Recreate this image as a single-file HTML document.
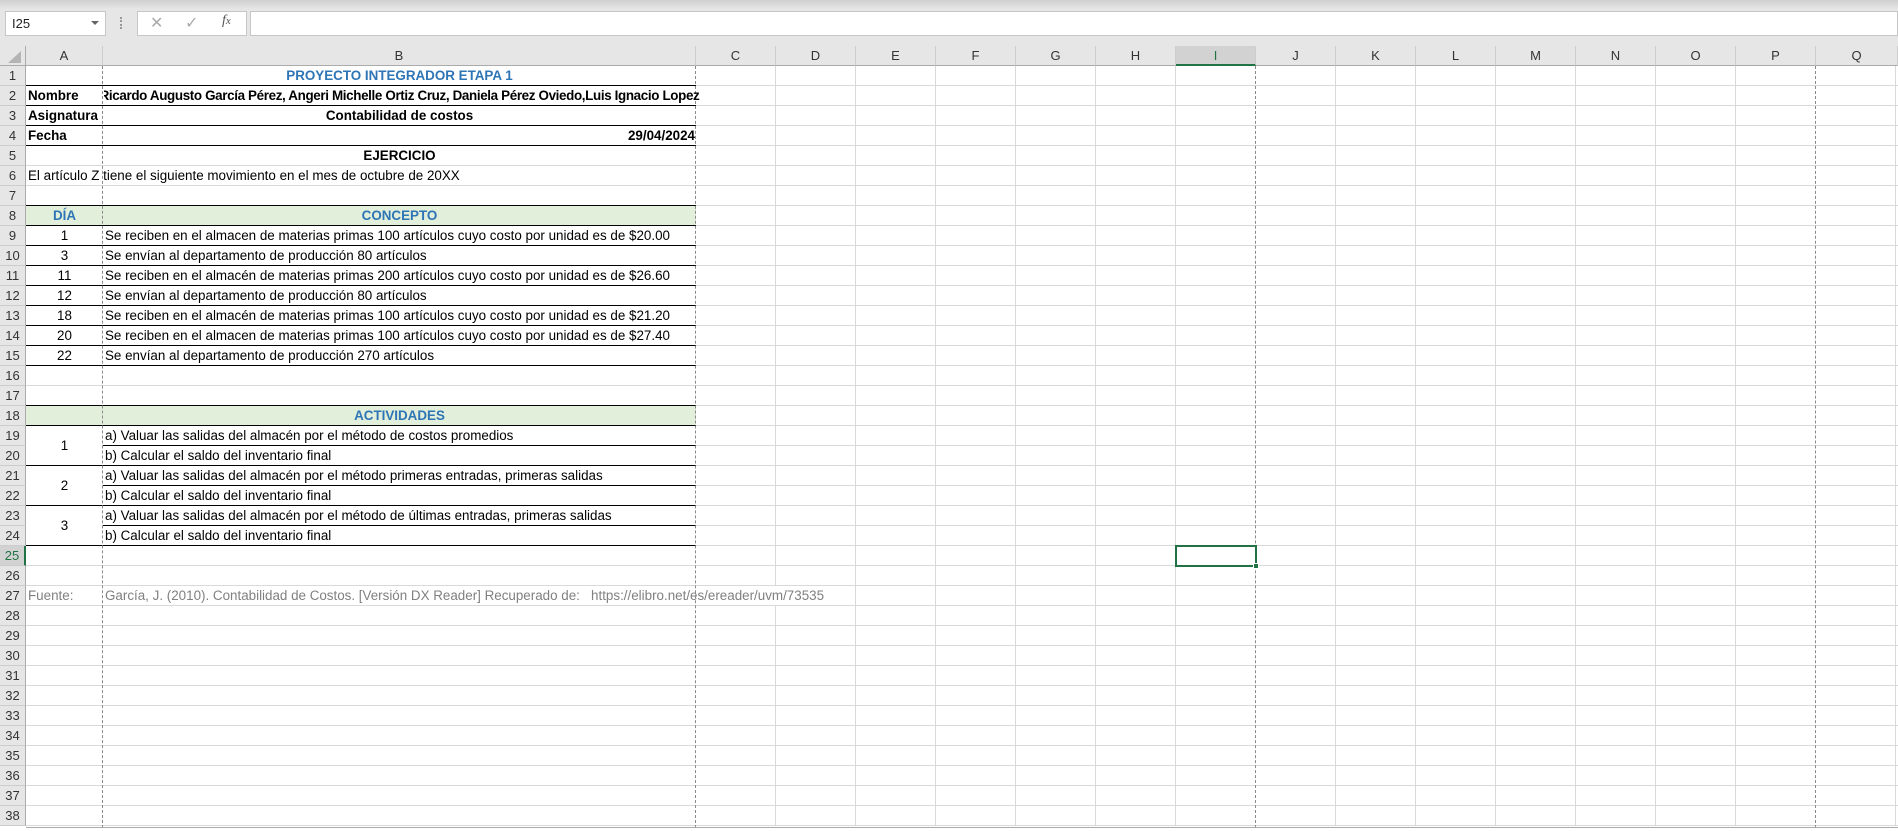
<!DOCTYPE html>
<html><head><meta charset="utf-8"><style>
*{margin:0;padding:0;box-sizing:border-box}
body{width:1898px;height:831px;overflow:hidden;background:#fff;font-family:"Liberation Sans",Arial,sans-serif;position:relative}
.a{position:absolute}
.top{left:0;top:0;width:1898px;height:46px;background:#e6e6e6}
.grad{left:0;top:0;width:1898px;height:9px;background:linear-gradient(#cfcfcf,#e6e6e6)}
.box{background:#fff;border:1px solid #c6c6c6}
.hgrid{left:26px;top:66px;width:1872px;height:760px;background-image:repeating-linear-gradient(to bottom,transparent 0 19px,#d9d9d9 19px 20px)}
.v{top:66px;width:1px;height:760px;background:#d9d9d9}
.colh{top:46px;height:20px;background:#e6e6e6;border-right:1px solid #cdcdcd;border-bottom:1px solid #ababab;font-size:13px;color:#333;text-align:center;line-height:20px}
.rowh{left:0;width:26px;height:20px;background:#e6e6e6;border-right:1px solid #ababab;border-bottom:1px solid #cdcdcd;font-size:13px;color:#333;text-align:center;line-height:20px}
.t{font-size:13.4px;line-height:20px;white-space:nowrap;color:#000;height:20px}
.b{font-weight:bold}
.blue{color:#2e75b6}
.c{display:flex;justify-content:center}
.r{text-align:right}
.hl{height:1px;background:#000}
.dash{width:0;border-left:1px dashed #8a8a8a;top:66px;height:762px}
.g{background:#e2efda}
</style></head><body>
<div class="a top"></div><div class="a grad"></div>
<div class="a box" style="left:5px;top:11px;width:101px;height:25px;font-size:13px;line-height:23px;padding-left:6px;color:#222">I25</div>
<div class="a" style="left:91px;top:21px;border-left:4px solid transparent;border-right:4px solid transparent;border-top:4px solid #666"></div>
<div class="a" style="left:120px;top:17px;width:2px;height:12px;border-left:2px dotted #999"></div>
<div class="a box" style="left:137px;top:11px;width:110px;height:25px"></div>
<div class="a" style="left:150px;top:13px;font-size:16px;color:#aaa">✕</div>
<div class="a" style="left:185px;top:13px;font-size:16px;color:#aaa">✓</div>
<div class="a" style="left:222px;top:13px;font-size:14px;color:#555;font-family:'Liberation Serif',serif;font-style:italic">f<span style="font-size:11px">x</span></div>
<div class="a box" style="left:250px;top:11px;width:1648px;height:25px"></div>

<div class="a hgrid"></div>
<div class="a v" style="left:775px"></div><div class="a v" style="left:855px"></div><div class="a v" style="left:935px"></div><div class="a v" style="left:1015px"></div><div class="a v" style="left:1095px"></div><div class="a v" style="left:1175px"></div><div class="a v" style="left:1335px"></div><div class="a v" style="left:1415px"></div><div class="a v" style="left:1495px"></div><div class="a v" style="left:1575px"></div><div class="a v" style="left:1655px"></div><div class="a v" style="left:1735px"></div><div class="a v" style="left:1895px"></div>

<div class="a" style="left:0;top:46px;width:26px;height:20px;background:#e6e6e6;border-right:1px solid #ababab;border-bottom:1px solid #ababab"></div>
<div class="a" style="left:8px;top:51px;width:0;height:0;border-left:13px solid transparent;border-bottom:12px solid #b4b4b4"></div>
<div class="a colh" style="left:26px;width:77px">A</div>
<div class="a colh" style="left:103px;width:593px">B</div>
<div class="a colh" style="left:696px;width:80px">C</div>
<div class="a colh" style="left:776px;width:80px">D</div>
<div class="a colh" style="left:856px;width:80px">E</div>
<div class="a colh" style="left:936px;width:80px">F</div>
<div class="a colh" style="left:1016px;width:80px">G</div>
<div class="a colh" style="left:1096px;width:80px">H</div>
<div class="a colh" style="left:1176px;width:80px;background:#d2d2d2;border-bottom:2px solid #217346;color:#217346">I</div>
<div class="a colh" style="left:1256px;width:80px">J</div>
<div class="a colh" style="left:1336px;width:80px">K</div>
<div class="a colh" style="left:1416px;width:80px">L</div>
<div class="a colh" style="left:1496px;width:80px">M</div>
<div class="a colh" style="left:1576px;width:80px">N</div>
<div class="a colh" style="left:1656px;width:80px">O</div>
<div class="a colh" style="left:1736px;width:80px">P</div>
<div class="a colh" style="left:1816px;width:82px">Q</div>

<div class="a rowh" style="top:66px">1</div><div class="a rowh" style="top:86px">2</div><div class="a rowh" style="top:106px">3</div><div class="a rowh" style="top:126px">4</div><div class="a rowh" style="top:146px">5</div><div class="a rowh" style="top:166px">6</div><div class="a rowh" style="top:186px">7</div><div class="a rowh" style="top:206px">8</div><div class="a rowh" style="top:226px">9</div><div class="a rowh" style="top:246px">10</div><div class="a rowh" style="top:266px">11</div><div class="a rowh" style="top:286px">12</div><div class="a rowh" style="top:306px">13</div><div class="a rowh" style="top:326px">14</div><div class="a rowh" style="top:346px">15</div><div class="a rowh" style="top:366px">16</div><div class="a rowh" style="top:386px">17</div><div class="a rowh" style="top:406px">18</div><div class="a rowh" style="top:426px">19</div><div class="a rowh" style="top:446px">20</div><div class="a rowh" style="top:466px">21</div><div class="a rowh" style="top:486px">22</div><div class="a rowh" style="top:506px">23</div><div class="a rowh" style="top:526px">24</div><div class="a rowh" style="top:546px;background:#d2d2d2;color:#217346;border-right:2px solid #217346">25</div><div class="a rowh" style="top:566px">26</div><div class="a rowh" style="top:586px">27</div><div class="a rowh" style="top:606px">28</div><div class="a rowh" style="top:626px">29</div><div class="a rowh" style="top:646px">30</div><div class="a rowh" style="top:666px">31</div><div class="a rowh" style="top:686px">32</div><div class="a rowh" style="top:706px">33</div><div class="a rowh" style="top:726px">34</div><div class="a rowh" style="top:746px">35</div><div class="a rowh" style="top:766px">36</div><div class="a rowh" style="top:786px">37</div><div class="a rowh" style="top:806px">38</div>

<!-- fills -->
<div class="a g" style="left:26px;top:206px;width:670px;height:19px"></div>
<div class="a g" style="left:26px;top:406px;width:670px;height:19px"></div>
<!-- hide merged cell line in A -->
<div class="a" style="left:26px;top:445px;width:76px;height:1px;background:#fff"></div>
<div class="a" style="left:26px;top:485px;width:76px;height:1px;background:#fff"></div>
<div class="a" style="left:26px;top:525px;width:76px;height:1px;background:#fff"></div>

<!-- black borders -->
<div class="a hl" style="left:26px;top:85px;width:670px"></div>
<div class="a hl" style="left:26px;top:105px;width:670px"></div>
<div class="a hl" style="left:26px;top:125px;width:670px"></div>
<div class="a hl" style="left:26px;top:145px;width:670px"></div>
<div class="a hl" style="left:26px;top:205px;width:670px"></div>
<div class="a hl" style="left:26px;top:225px;width:670px"></div>
<div class="a hl" style="left:26px;top:245px;width:670px"></div>
<div class="a hl" style="left:26px;top:265px;width:670px"></div>
<div class="a hl" style="left:26px;top:285px;width:670px"></div>
<div class="a hl" style="left:26px;top:305px;width:670px"></div>
<div class="a hl" style="left:26px;top:325px;width:670px"></div>
<div class="a hl" style="left:26px;top:345px;width:670px"></div>
<div class="a hl" style="left:26px;top:365px;width:670px"></div>
<div class="a hl" style="left:26px;top:405px;width:670px"></div>
<div class="a hl" style="left:26px;top:425px;width:670px"></div>
<div class="a hl" style="left:103px;top:445px;width:593px"></div>
<div class="a hl" style="left:26px;top:465px;width:670px"></div>
<div class="a hl" style="left:103px;top:485px;width:593px"></div>
<div class="a hl" style="left:26px;top:505px;width:670px"></div>
<div class="a hl" style="left:103px;top:525px;width:593px"></div>
<div class="a hl" style="left:26px;top:545px;width:670px"></div>

<!-- row 27 overflow cover -->
<div class="a" style="left:770px;top:586px;width:10px;height:19px;background:#fff"></div>

<!-- page breaks -->
<div class="a dash" style="left:102px"></div>
<div class="a dash" style="left:695px"></div>
<div class="a dash" style="left:1255px"></div>
<div class="a dash" style="left:1815px"></div>

<!-- text -->
<div class="a t b blue c" style="left:103px;top:66px;width:593px">PROYECTO INTEGRADOR ETAPA 1</div>
<div class="a t b" style="left:28px;top:86px">Nombre</div>
<div class="a t b c" style="left:103px;top:86px;width:593px;letter-spacing:-0.35px;clip-path:inset(0 -12px 0 1px)">Ricardo Augusto García Pérez, Angeri Michelle Ortiz Cruz, Daniela Pérez Oviedo,Luis Ignacio Lopez</div>
<div class="a t b" style="left:28px;top:106px">Asignatura</div>
<div class="a t b c" style="left:103px;top:106px;width:593px">Contabilidad de costos</div>
<div class="a t b" style="left:28px;top:126px">Fecha</div>
<div class="a t b r" style="left:103px;top:126px;width:592px">29/04/2024</div>
<div class="a t b c" style="left:103px;top:146px;width:593px">EJERCICIO</div>
<div class="a t" style="left:28px;top:166px">El artículo Z tiene el siguiente movimiento en el mes de octubre de 20XX</div>
<div class="a t b blue c" style="left:26px;top:206px;width:77px">DÍA</div>
<div class="a t b blue c" style="left:103px;top:206px;width:593px">CONCEPTO</div>
<div class="a t c" style="left:26px;top:226px;width:77px">1</div><div class="a t" style="left:105px;top:226px">Se reciben en el almacen de materias primas 100 artículos cuyo costo por unidad es de $20.00</div>
<div class="a t c" style="left:26px;top:246px;width:77px">3</div><div class="a t" style="left:105px;top:246px">Se envían al departamento de producción 80 artículos</div>
<div class="a t c" style="left:26px;top:266px;width:77px">11</div><div class="a t" style="left:105px;top:266px">Se reciben en el almacén de materias primas 200 artículos cuyo costo por unidad es de $26.60</div>
<div class="a t c" style="left:26px;top:286px;width:77px">12</div><div class="a t" style="left:105px;top:286px">Se envían al departamento de producción 80 artículos</div>
<div class="a t c" style="left:26px;top:306px;width:77px">18</div><div class="a t" style="left:105px;top:306px">Se reciben en el almacén de materias primas 100 artículos cuyo costo por unidad es de $21.20</div>
<div class="a t c" style="left:26px;top:326px;width:77px">20</div><div class="a t" style="left:105px;top:326px">Se reciben en el almacen de materias primas 100 artículos cuyo costo por unidad es de $27.40</div>
<div class="a t c" style="left:26px;top:346px;width:77px">22</div><div class="a t" style="left:105px;top:346px">Se envían al departamento de producción 270 artículos</div>
<div class="a t b blue c" style="left:103px;top:406px;width:593px">ACTIVIDADES</div>
<div class="a t c" style="left:26px;top:436px;width:77px">1</div>
<div class="a t" style="left:105px;top:426px">a) Valuar las salidas del almacén por el método de costos promedios</div>
<div class="a t" style="left:105px;top:446px">b) Calcular el saldo del inventario final</div>
<div class="a t c" style="left:26px;top:476px;width:77px">2</div>
<div class="a t" style="left:105px;top:466px">a) Valuar las salidas del almacén por el método primeras entradas, primeras salidas</div>
<div class="a t" style="left:105px;top:486px">b) Calcular el saldo del inventario final</div>
<div class="a t c" style="left:26px;top:516px;width:77px">3</div>
<div class="a t" style="left:105px;top:506px">a) Valuar las salidas del almacén por el método de últimas entradas, primeras salidas</div>
<div class="a t" style="left:105px;top:526px">b) Calcular el saldo del inventario final</div>
<div class="a t" style="left:28px;top:586px;color:#808080">Fuente:</div>
<div class="a t" style="left:105px;top:586px;color:#808080">García, J. (2010). Contabilidad de Costos. [Versión DX Reader] Recuperado de:&nbsp;&nbsp; https://elibro.net/es/ereader/uvm/73535</div>

<!-- selection -->
<div class="a" style="left:1175px;top:545px;width:82px;height:22px;border:2px solid #217346"></div>
<div class="a" style="left:1253px;top:563px;width:6px;height:6px;background:#217346;border:1px solid #fff"></div>
<div class="a" style="left:26px;top:827px;width:1872px;height:4px;background:#fff;border-top:1px solid #aaa"></div>
</body></html>
